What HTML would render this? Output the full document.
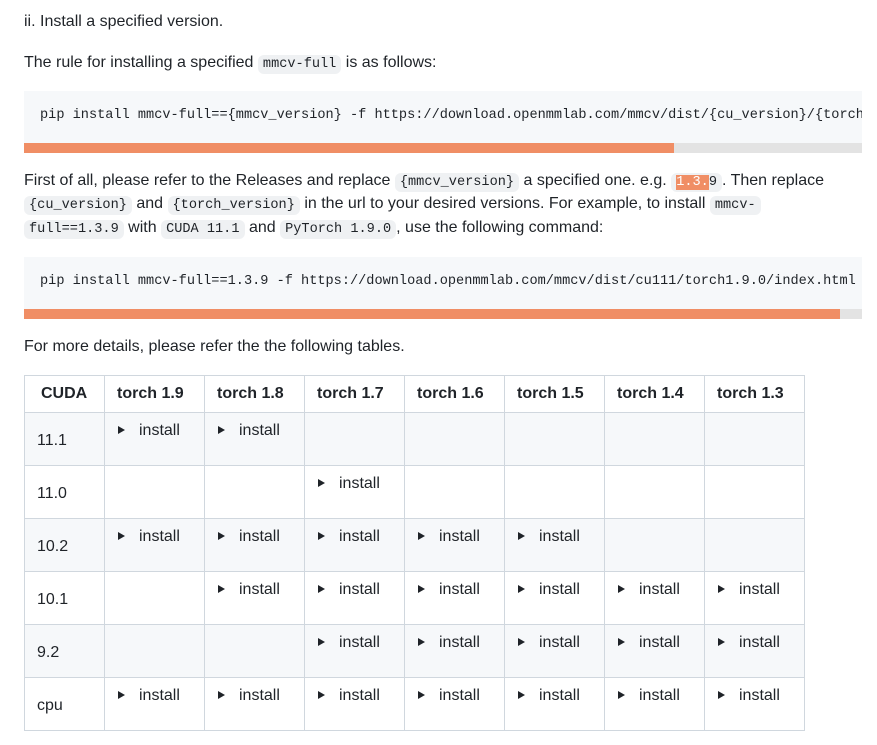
<!DOCTYPE html>
<html><head><style>
body{margin:0;background:#fff;font-family:"Liberation Sans",sans-serif;font-size:16px;color:#1f2328;width:877px;height:745px;overflow:hidden;position:relative}
.t{position:absolute;left:24px;line-height:24px;white-space:nowrap}
code,.m{font-family:"Liberation Mono",monospace;font-size:13.6px}
code{background:#eff1f3;border-radius:6px;padding:2px 5px}
.pre{position:absolute;left:24px;width:838px;background:#f6f8fa;height:52px;overflow:hidden}
.pre span{position:absolute;left:16px;top:17px;white-space:nowrap;font-family:"Liberation Mono",monospace;font-size:13.6px;color:#1f2328}
.sb{position:absolute;left:24px;width:838px;height:10px;background:#e3e3e3}
.sb div{height:10px;background:#f08e65}
table{position:absolute;left:24px;top:375px;border-collapse:collapse}
td,th{border:1px solid #d0d7de;padding:0 12px;vertical-align:top;text-align:left;box-sizing:border-box}
th{height:37px;font-weight:bold;vertical-align:middle;padding-left:12px}
th:first-child{padding-left:16px}
td{height:53px;width:100px;padding-top:9px}
td:first-child,th:first-child{width:80px}
td:first-child{vertical-align:middle;padding-top:4px}
tr.g td{background:#f6f8fa}
.i::before{content:"";display:inline-block;border-left:7px solid #1f2328;border-top:4.5px solid transparent;border-bottom:4.5px solid transparent;margin:0 14px 1px 1px}
</style></head><body>
<div class="t" style="top:10px">ii. Install a specified version.</div>
<div class="t" style="top:51px">The rule for installing a specified <code>mmcv-full</code> is as follows:</div>
<div class="pre" style="top:91px"><span>pip install mmcv-full=={mmcv_version} -f https://download.openmmlab.com/mmcv/dist/{cu_version}/{torch_version}/index.html</span></div>
<div class="sb" style="top:143px"><div style="width:650px"></div></div>
<div class="t" style="top:169px">First of all, please refer to the Releases and replace <code>{mmcv_version}</code> a specified one. e.g. <code><span style="background:#f08e65;color:#fff">1.3.</span>9</code>. Then replace</div>
<div class="t" style="top:192px"><code>{cu_version}</code> and <code>{torch_version}</code> in the url to your desired versions. For example, to install <code>mmcv-</code></div>
<div class="t" style="top:216px"><code>full==1.3.9</code> with <code>CUDA 11.1</code> and <code>PyTorch 1.9.0</code>, use the following command:</div>
<div class="pre" style="top:257px"><span>pip install mmcv-full==1.3.9 -f https://download.openmmlab.com/mmcv/dist/cu111/torch1.9.0/index.html</span></div>
<div class="sb" style="top:309px"><div style="width:816px"></div></div>
<div class="t" style="top:335px">For more details, please refer the the following tables.</div>
<table>
<tr><th>CUDA</th><th>torch 1.9</th><th>torch 1.8</th><th>torch 1.7</th><th>torch 1.6</th><th>torch 1.5</th><th>torch 1.4</th><th>torch 1.3</th></tr>
<tr class="g"><td>11.1</td><td class="i">install</td><td class="i">install</td><td></td><td></td><td></td><td></td><td></td></tr>
<tr><td>11.0</td><td></td><td></td><td class="i">install</td><td></td><td></td><td></td><td></td></tr>
<tr class="g"><td>10.2</td><td class="i">install</td><td class="i">install</td><td class="i">install</td><td class="i">install</td><td class="i">install</td><td></td><td></td></tr>
<tr><td>10.1</td><td></td><td class="i">install</td><td class="i">install</td><td class="i">install</td><td class="i">install</td><td class="i">install</td><td class="i">install</td></tr>
<tr class="g"><td>9.2</td><td></td><td></td><td class="i">install</td><td class="i">install</td><td class="i">install</td><td class="i">install</td><td class="i">install</td></tr>
<tr><td>cpu</td><td class="i">install</td><td class="i">install</td><td class="i">install</td><td class="i">install</td><td class="i">install</td><td class="i">install</td><td class="i">install</td></tr>
</table>
</body></html>
